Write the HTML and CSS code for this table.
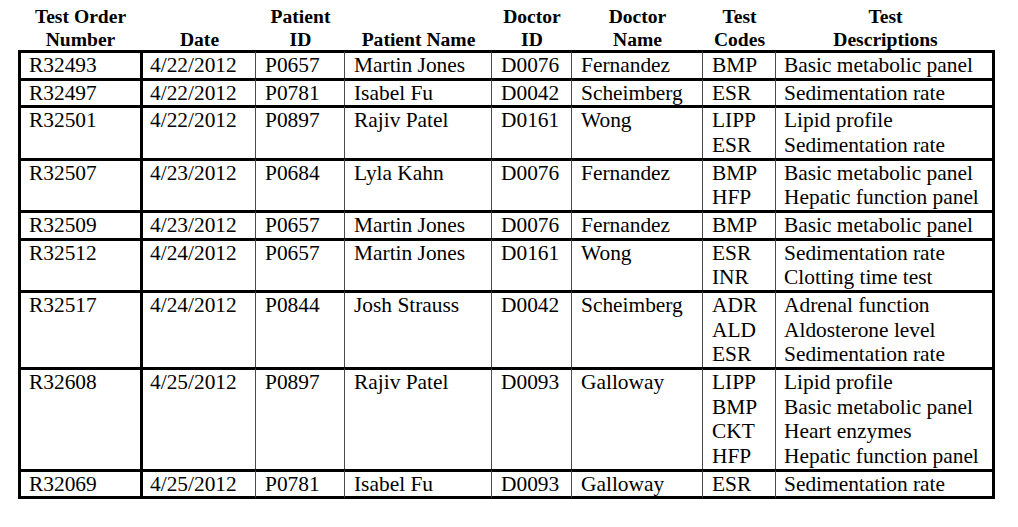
FILE: index.html
```html
<!DOCTYPE html>
<html lang="en">
<head>
<meta charset="utf-8">
<title>Test Orders</title>
<link rel="stylesheet" href="styles.css">
</head>
<body>
<div class="orders">
  <div class="row head">
    <div class="h">Test Order<br>Number</div>
    <div class="h">Date</div>
    <div class="h">Patient<br>ID</div>
    <div class="h">Patient Name</div>
    <div class="h">Doctor<br>ID</div>
    <div class="h">Doctor<br>Name</div>
    <div class="h">Test<br>Codes</div>
    <div class="h">Test<br>Descriptions</div>
  </div>
  <div class="row">
    <div class="c">R32493</div><div class="c">4/22/2012</div><div class="c">P0657</div><div class="c">Martin Jones</div><div class="c">D0076</div><div class="c">Fernandez</div><div class="c">BMP</div><div class="c">Basic metabolic panel</div>
  </div>
  <div class="row">
    <div class="c">R32497</div><div class="c">4/22/2012</div><div class="c">P0781</div><div class="c">Isabel Fu</div><div class="c">D0042</div><div class="c">Scheimberg</div><div class="c">ESR</div><div class="c">Sedimentation rate</div>
  </div>
  <div class="row">
    <div class="c">R32501</div><div class="c">4/22/2012</div><div class="c">P0897</div><div class="c">Rajiv Patel</div><div class="c">D0161</div><div class="c">Wong</div><div class="c">LIPP<br>ESR</div><div class="c">Lipid profile<br>Sedimentation rate</div>
  </div>
  <div class="row">
    <div class="c">R32507</div><div class="c">4/23/2012</div><div class="c">P0684</div><div class="c">Lyla Kahn</div><div class="c">D0076</div><div class="c">Fernandez</div><div class="c">BMP<br>HFP</div><div class="c">Basic metabolic panel<br>Hepatic function panel</div>
  </div>
  <div class="row">
    <div class="c">R32509</div><div class="c">4/23/2012</div><div class="c">P0657</div><div class="c">Martin Jones</div><div class="c">D0076</div><div class="c">Fernandez</div><div class="c">BMP</div><div class="c">Basic metabolic panel</div>
  </div>
  <div class="row">
    <div class="c">R32512</div><div class="c">4/24/2012</div><div class="c">P0657</div><div class="c">Martin Jones</div><div class="c">D0161</div><div class="c">Wong</div><div class="c">ESR<br>INR</div><div class="c">Sedimentation rate<br>Clotting time test</div>
  </div>
  <div class="row">
    <div class="c">R32517</div><div class="c">4/24/2012</div><div class="c">P0844</div><div class="c">Josh Strauss</div><div class="c">D0042</div><div class="c">Scheimberg</div><div class="c">ADR<br>ALD<br>ESR</div><div class="c">Adrenal function<br>Aldosterone level<br>Sedimentation rate</div>
  </div>
  <div class="row">
    <div class="c">R32608</div><div class="c">4/25/2012</div><div class="c">P0897</div><div class="c">Rajiv Patel</div><div class="c">D0093</div><div class="c">Galloway</div><div class="c">LIPP<br>BMP<br>CKT<br>HFP</div><div class="c">Lipid profile<br>Basic metabolic panel<br>Heart enzymes<br>Hepatic function panel</div>
  </div>
  <div class="row">
    <div class="c">R32069</div><div class="c">4/25/2012</div><div class="c">P0781</div><div class="c">Isabel Fu</div><div class="c">D0093</div><div class="c">Galloway</div><div class="c">ESR</div><div class="c">Sedimentation rate</div>
  </div>
</div>
</body>
</html>
```

FILE: styles.css
```css
html, body {
  margin: 0;
  padding: 0;
  background: #fff;
}

body {
  padding: 5px 0 0 18px;
  font-family: "Liberation Serif", "Times New Roman", serif;
  color: #000;
}

.orders {
  display: grid;
  grid-template-columns: 125px 113px 89px 147px 80px 131px 73px 219px;
  width: 977px;
}

.row {
  display: contents;
}

.h {
  align-self: end;
  text-align: center;
  font-weight: bold;
  font-size: 19.6px;
  line-height: 23px;
  margin-bottom: -1px;
}

.c {
  font-size: 21.4px;
  line-height: 24.65px;
  padding-left: 9px;
  border-top: 3px solid #000;
  border-right: 1px solid #4a4a4a;
  white-space: nowrap;
}

.row > .c:first-child {
  border-left: 3px solid #000;
  border-right: 3px solid #000;
  padding-left: 8px;
}

.row > .c:nth-child(2) {
  padding-left: 7px;
}

.row > .c:last-child {
  border-right: 3px solid #000;
  padding-left: 8px;
}

.row:last-child > .c {
  border-bottom: 3px solid #000;
}
```
